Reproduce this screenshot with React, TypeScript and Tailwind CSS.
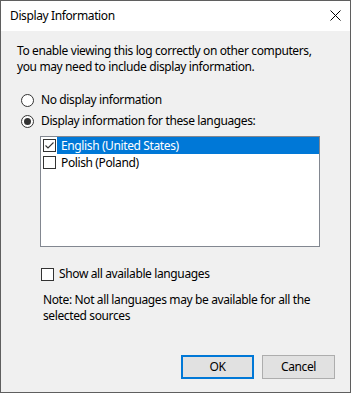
import React, { useState } from 'react'

const font = { fontFamily: '"Segoe UI", "Noto Sans", sans-serif' }

function Radio({ checked }: { checked: boolean }) {
  return (
    <span className="w-[13px] h-[13px] rounded-full border border-[#333333] bg-white flex items-center justify-center shrink-0">
      {checked && <span className="w-[7px] h-[7px] rounded-full bg-[#333333]" />}
    </span>
  )
}

function Check({ checked }: { checked: boolean }) {
  return (
    <span className="w-[13px] h-[13px] border border-[#333333] bg-white flex items-center justify-center shrink-0">
      {checked && (
        <svg width="11" height="11" viewBox="0 0 11 11">
          <path d="M1.5 5.5 L4 8 L9.5 2.5" fill="none" stroke="#333333" strokeWidth="1.1" />
        </svg>
      )}
    </span>
  )
}

export default function App() {
  const [mode, setMode] = useState(1)
  const [langs, setLangs] = useState([true, false])
  const [showAll, setShowAll] = useState(false)

  const names = ['English (United States)', 'Polish (Poland)']

  return (
    <div className="w-[352px] h-[393px] bg-white text-[12px] leading-[16px] tracking-[-0.38px] text-black" style={font}>
      <div className="w-[351px] h-[393px] border border-[#5f5f5f] flex flex-col bg-[#f0f0f0]">
        {/* title bar */}
        <div className="h-[30px] bg-white flex items-center justify-between pl-[9px] pr-[9px] shrink-0">
          <span className="text-[12px]">Display Information</span>
          <svg width="11" height="11" viewBox="0 0 11 11" className="mt-[-1px]">
            <path d="M0.5 0.5 L10.5 10.5 M10.5 0.5 L0.5 10.5" stroke="#000" strokeWidth="1" />
          </svg>
        </div>

        <div className="flex flex-col flex-1 pl-[15px]">
          <p className="mt-[12px] pl-[1px]">
            To enable viewing this log correctly on other computers,
            <br />
            you may need to include display information.
          </p>

          <div className="mt-[17px] ml-[5px] flex items-center gap-[7px] h-[16px]" onClick={() => setMode(0)}>
            <Radio checked={mode === 0} />
            <span>No display information</span>
          </div>
          <div className="mt-[5px] ml-[5px] flex items-center gap-[7px] h-[16px]" onClick={() => setMode(1)}>
            <Radio checked={mode === 1} />
            <span>Display information for these languages:</span>
          </div>

          <div className="mt-[7px] ml-[24px] w-[280px] h-[111px] border border-[#828790] bg-white">
            {names.map((n, i) => (
              <div key={n} className="flex items-center h-[17px] pl-[2px]">
                <span onClick={() => setLangs(langs.map((v, j) => (j === i ? !v : v)))}>
                  <Check checked={langs[i]} />
                </span>
                <span className={'ml-[1px] flex-1 h-full flex items-center pl-[4px] ' + (i === 0 ? 'bg-[#0078d7] text-white' : '')}>
                  {n}
                </span>
              </div>
            ))}
          </div>

          <div className="mt-[19px] ml-[25px] flex items-center gap-[5px] h-[16px]" onClick={() => setShowAll(!showAll)}>
            <Check checked={showAll} />
            <span>Show all available languages</span>
          </div>

          <p className="mt-[10px] ml-[27px]">
            Note: Not all languages may be available for all the
            <br />
            selected sources
          </p>

          <div className="mt-auto mb-[13px] mr-[15px] flex justify-end gap-[8px]">
            <button className="w-[73px] h-[24px] bg-[#e1e1e1] border-2 border-[#0078d7]">OK</button>
            <button className="w-[73px] h-[24px] bg-[#e1e1e1] border border-[#adadad]">Cancel</button>
          </div>
        </div>
      </div>
    </div>
  )
}
